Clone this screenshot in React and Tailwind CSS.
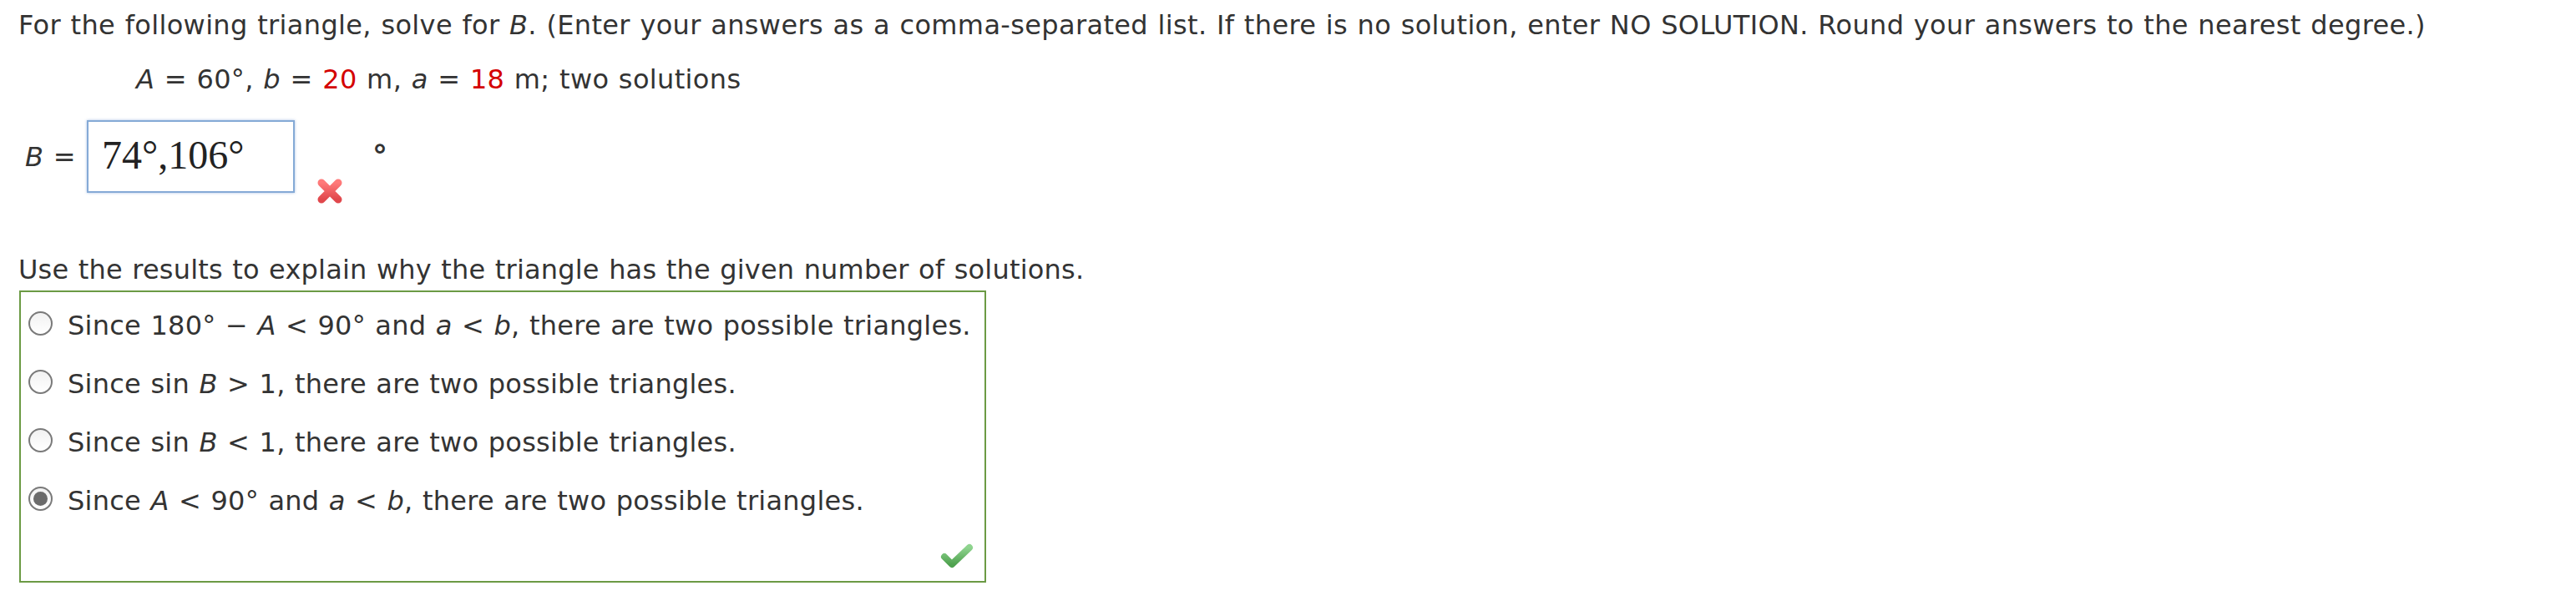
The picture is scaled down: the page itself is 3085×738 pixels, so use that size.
import React from "react";

function Radio({ checked }) {
  return (
    <span className="mt-[1px] flex h-[29px] w-[29px] shrink-0 items-center justify-center rounded-full border-2 border-[#7a7a7a] bg-gradient-to-b from-[#f2f2f2] to-white">
      {checked && <span className="h-[17px] w-[17px] rounded-full bg-[#6b6b6b]" />}
    </span>
  );
}

function Option({ checked, children }) {
  return (
    <div className="flex items-start gap-[18px] whitespace-nowrap leading-[37px] tracking-[0.25px]">
      <Radio checked={checked} />
      <span>{children}</span>
    </div>
  );
}

function RedX() {
  return (
    <svg width="34" height="34" viewBox="0 0 34 34" className="block">
      <defs>
        <linearGradient id="rx" x1="0" y1="0" x2="0" y2="1">
          <stop offset="0" stopColor="#ff7a7a" />
          <stop offset="1" stopColor="#e0474c" />
        </linearGradient>
      </defs>
      <path d="M7 7 L27 27 M27 7 L7 27" stroke="url(#rx)" strokeWidth="9" strokeLinecap="round" fill="none" />
    </svg>
  );
}

function GreenCheck() {
  return (
    <svg width="40" height="32" viewBox="0 0 40 32" className="block">
      <defs>
        <linearGradient id="gc" x1="0" y1="0" x2="0" y2="1">
          <stop offset="0" stopColor="#8fd48f" />
          <stop offset="1" stopColor="#4fa24f" />
        </linearGradient>
      </defs>
      <path d="M5 17 L14 26 L35 6" stroke="url(#gc)" strokeWidth="8" strokeLinecap="round" strokeLinejoin="round" fill="none" />
    </svg>
  );
}

export default function App() {
  return (
    <div className="min-h-[738px] w-[3085px] bg-white pl-[22px] font-['DejaVu_Sans',Verdana,sans-serif] text-[32px] tracking-[0.35px] [word-spacing:1px] text-[#333]">
      <div className="whitespace-nowrap pt-[12px] leading-[37px]">
        For the following triangle, solve for <i>B</i>. (Enter your answers as a comma-separated list. If there is no solution, enter NO SOLUTION. Round your answers to the nearest degree.)
      </div>

      <div className="mt-[28px] whitespace-nowrap pl-[141px] leading-[37px]">
        <i>A</i> = 60°, <i>b</i> = <span className="text-[#d40000]">20</span> m, <i>a</i> = <span className="text-[#d40000]">18</span> m; two solutions
      </div>

      <div className="mt-[30px] flex items-start">
        <div className="mt-[26px] w-[82px] whitespace-nowrap pl-[8px] leading-[37px]">
          <i>B</i> =
        </div>
        <div className="h-[87px] w-[249px] border-2 border-[#85aad6] bg-white pl-[16px] pt-[16px] font-['Liberation_Serif','Times_New_Roman',serif] text-[48px] leading-[48px] tracking-normal text-[#222] shadow-[0_0_3px_rgba(110,150,210,0.6)]">
          74°,106°
        </div>
        <div className="ml-[25px] mt-[68px]">
          <RedX />
        </div>
        <div className="ml-[34px] mt-[24px] text-[36px] font-bold leading-[37px]">°</div>
      </div>

      <div className="mt-[59px] whitespace-nowrap leading-[37px] tracking-[0.2px]">
        Use the results to explain why the triangle has the given number of solutions.
      </div>

      <div className="ml-[1px] mt-[6px] flex w-[1158px] flex-col border-2 border-[#6b9a44] pb-[14px] pl-[9px] pr-[13px] pt-[22px]">
        <div className="flex flex-col gap-[33px]">
          <Option>
            Since 180° − <i>A</i> &lt; 90° and <i>a</i> &lt; <i>b</i>, there are two possible triangles.
          </Option>
          <Option>
            Since sin <i>B</i> &gt; 1, there are two possible triangles.
          </Option>
          <Option>
            Since sin <i>B</i> &lt; 1, there are two possible triangles.
          </Option>
          <Option checked>
            Since <i>A</i> &lt; 90° and <i>a</i> &lt; <i>b</i>, there are two possible triangles.
          </Option>
        </div>
        <div className="mt-[31px] flex justify-end">
          <GreenCheck />
        </div>
      </div>
    </div>
  );
}
